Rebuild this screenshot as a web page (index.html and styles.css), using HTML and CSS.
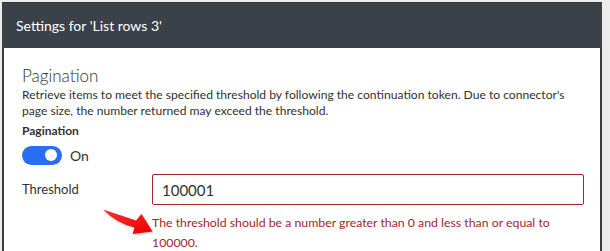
FILE: index.html
```html
<!DOCTYPE html>
<html>
<head>
<meta charset="utf-8">
<link rel="stylesheet" href="styles.css">
</head>
<body>
<div class="panel">
  <div class="header">Settings for 'List rows 3'</div>
  <div class="content">
    <div class="title">Pagination</div>
    <div class="desc">Retrieve items to meet the specified threshold by following the continuation token. Due to connector's<br>page size, the number returned may exceed the threshold.</div>
    <div class="label">Pagination</div>
    <div class="toggle-row">
      <span class="toggle"><span class="knob"></span></span>
      <span class="toggle-text">On</span>
    </div>
    <div class="field">
      <div class="field-label">Threshold</div>
      <div class="field-main">
        <div class="input">100001</div>
        <div class="error">The threshold should be a number greater than 0 and less than or equal to<br>100000.</div>
      </div>
    </div>
  </div>
  <svg class="arrow" width="60" height="40" viewBox="98 205 60 40">
    <defs>
      <linearGradient id="g" x1="0" y1="0" x2="1" y2="1">
        <stop offset="0" stop-color="#ff3030"/>
        <stop offset="1" stop-color="#e60000"/>
      </linearGradient>
    </defs>
    <path d="M103 209.5 L136 220.5 L141.5 214 L152.5 231.5 L132.5 234 L134.5 227.5 Q116 223 103 209.5 Z" fill="url(#g)"/>
  </svg>
</div>
</body>
</html>
```
FILE: styles.css
```css
html, body {
  margin: 0;
  padding: 0;
}
body {
  background: #ececec;
  width: 610px;
  height: 251px;
  overflow: hidden;
  font-family: "Lato", "Noto Sans", sans-serif;
  color: #323130;
}
.panel {
  position: relative;
  margin: 2px 8px 0 2px;
  background: #383d43;
  padding: 0 2px;
  height: 249px;
  box-sizing: border-box;
  border-top: 1px solid #33373c;
}
.header {
  height: 45px;
  background: #3b4148;
  color: #ffffff;
  font-size: 14px;
  line-height: 45px;
  margin: 0 -2px;
  padding-left: 14px;
}
.content {
  background: #ffffff;
  height: 210px;
  padding: 17px 0 0 18px;
  box-sizing: border-box;
}
.title {
  font-size: 17px;
  line-height: 22px;
  font-weight: 300;
}
.desc {
  font-size: 12.1px;
  line-height: 15.5px;
  white-space: nowrap;
}
.label {
  margin-top: 5px;
  font-size: 12px;
  font-weight: 700;
  line-height: 16px;
}
.toggle-row {
  display: flex;
  align-items: center;
  gap: 8px;
  margin-top: 6px;
  height: 20px;
}
.toggle {
  width: 40px;
  height: 19px;
  border-radius: 10px;
  background: #2a6cf2;
  display: flex;
  align-items: center;
  justify-content: flex-end;
  padding-right: 5px;
  box-sizing: border-box;
}
.knob {
  width: 12px;
  height: 12px;
  border-radius: 50%;
  background: #ffffff;
}
.toggle-text {
  font-size: 14px;
}
.field {
  display: flex;
  margin-top: 8px;
}
.field-label {
  width: 130px;
  font-size: 13px;
  line-height: 33px;
}
.field-main {
  width: 432px;
}
.input {
  height: 31px;
  margin-top: 1px;
  box-sizing: border-box;
  border: 1px solid #a4262c;
  border-radius: 2px;
  padding-left: 9px;
  font-size: 15px;
  line-height: 30px;
}
.error {
  color: #a4262c;
  font-size: 12.3px;
  line-height: 19.5px;
  margin-top: 8px;
  white-space: nowrap;
}
.arrow {
  position: absolute;
  left: 96px;
  top: 202px;
  filter: drop-shadow(1px 1px 1px rgba(0,0,0,0.25));
}
```
